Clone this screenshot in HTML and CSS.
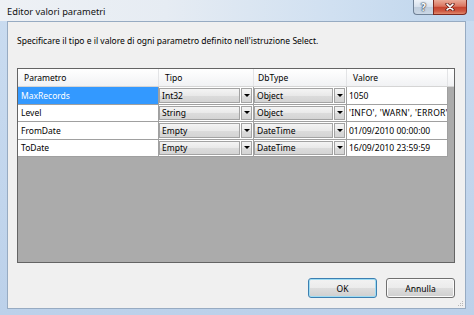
FILE: index.html
```html
<!DOCTYPE html>
<html>
<head>
<meta charset="utf-8">
<title>Editor valori parametri</title>
<link rel="stylesheet" href="styles.css">
</head>
<body>
<div class="window">
  <div class="titlebar">
    <span class="title">Editor valori parametri</span>
    <div class="caption">
      <div class="cbtn help">?</div>
      <div class="cbtn close">
        <svg width="10" height="8" viewBox="0 0 10 8"><path d="M2 1.2 L8 6.8 M8 1.2 L2 6.8" stroke="#5a1a12" stroke-width="3.2" stroke-linecap="round"/><path d="M2 1.2 L8 6.8 M8 1.2 L2 6.8" stroke="#ffffff" stroke-width="1.6" stroke-linecap="round"/></svg>
      </div>
    </div>
  </div>
  <div class="client">
    <p class="desc">Specificare il tipo e il valore di ogni parametro definito nell'istruzione Select.</p>
    <div class="grid">
      <div class="row head">
        <div class="c c1">Parametro</div>
        <div class="c c2">Tipo</div>
        <div class="c c3">DbType</div>
        <div class="c c4">Valore</div>
      </div>
      <div class="row">
        <div class="c c1 sel">MaxRecords</div>
        <div class="c c2"><div class="combo"><span class="field">Int32</span><span class="arr"></span></div></div>
        <div class="c c3"><div class="combo"><span class="field">Object</span><span class="arr"></span></div></div>
        <div class="c c4">1050</div>
      </div>
      <div class="row">
        <div class="c c1">Level</div>
        <div class="c c2"><div class="combo"><span class="field">String</span><span class="arr"></span></div></div>
        <div class="c c3"><div class="combo"><span class="field">Object</span><span class="arr"></span></div></div>
        <div class="c c4 wide">'INFO', 'WARN', 'ERROR'</div>
      </div>
      <div class="row">
        <div class="c c1">FromDate</div>
        <div class="c c2"><div class="combo"><span class="field">Empty</span><span class="arr"></span></div></div>
        <div class="c c3"><div class="combo"><span class="field">DateTime</span><span class="arr"></span></div></div>
        <div class="c c4">01/09/2010 00:00:00</div>
      </div>
      <div class="row">
        <div class="c c1">ToDate</div>
        <div class="c c2"><div class="combo"><span class="field">Empty</span><span class="arr"></span></div></div>
        <div class="c c3"><div class="combo"><span class="field">DateTime</span><span class="arr"></span></div></div>
        <div class="c c4">16/09/2010 23:59:59</div>
      </div>
    </div>
    <div class="buttons">
      <button class="btn default">OK</button>
      <button class="btn">Annulla</button>
    </div>
    <svg class="grip" width="7" height="7" viewBox="0 0 7 7"><g fill="#b8b8b8"><rect x="5" y="1" width="1" height="1"/><rect x="3" y="3" width="1" height="1"/><rect x="5" y="3" width="1" height="1"/><rect x="1" y="5" width="1" height="1"/><rect x="3" y="5" width="1" height="1"/><rect x="5" y="5" width="1" height="1"/></g></svg>
  </div>
</div>
</body>
</html>
```
FILE: styles.css
```css
* { box-sizing: border-box; }
html, body { margin: 0; padding: 0; }
body {
  width: 474px;
  height: 315px;
  overflow: hidden;
  font-family: "Noto Sans", "Open Sans", sans-serif;
  font-size: 8.5px;
  color: #000;
  background: #c2d5ea;
}
.window {
  width: 474px;
  height: 315px;
  display: flex;
  flex-direction: column;
  padding: 0 8px 6px 7px;
  background: linear-gradient(to bottom, #cadcf0, #bcd1ea);
}
.titlebar {
  height: 21px;
  flex: none;
  display: flex;
  justify-content: space-between;
  align-items: flex-start;
  margin: 0 -8px 0 -7px;
  padding: 0 7px;
  background: linear-gradient(to right, #eef1f5 0%, #e6ecf3 35%, #d0e0f1 70%, #bdd4ec 100%);
}
.title {
  font-size: 9.3px;
  line-height: 12px;
  margin-top: 6px;
  color: #111;
}
.caption { display: flex; }
.cbtn {
  height: 15px;
  display: flex;
  align-items: center;
  justify-content: center;
}
.help {
  width: 20px;
  border: 1px solid #6f8196;
  border-top: none;
  border-right: none;
  border-radius: 0 0 0 4px;
  background: linear-gradient(#eef3f9, #d6e0ec 50%, #bfcddd 51%, #cbd8e6);
  color: #fff;
  font-weight: bold;
  font-size: 10px;
  line-height: 10px;
  text-shadow: 0 0 1px #2d3b4d, 0 0 1px #2d3b4d, 0 0 2px #2d3b4d;
}
.close {
  width: 34px;
  border: 1px solid #7e2a20;
  border-top: none;
  border-radius: 0 0 4px 0;
  background: linear-gradient(#eaab98, #da7560 45%, #c6442f 52%, #cf5a43 80%, #e08a6e);
}
.client {
  flex: 1;
  display: flex;
  flex-direction: column;
  background: #f0f0f0;
  border: 1px solid #97abc2;
  padding: 13px 10px 10px 9px;
  position: relative;
}
.desc {
  margin: 0;
  line-height: 12px;
  height: 12px;
  flex: none;
}
.grid {
  flex: 1;
  margin-top: 21px;
  border: 1px solid #646464;
  background: #ababab;
  display: flex;
  flex-direction: column;
}
.row {
  display: flex;
  height: 17.5px;
  flex: none;
}
.row.head {
  height: 18px;
  background: linear-gradient(#ffffff, #f1f2f4);
  border-bottom: 1px solid #d5d5d5;
}
.c {
  height: 100%;
  display: flex;
  align-items: center;
  white-space: nowrap;
  overflow: hidden;
  background: #fff;
  border-right: 1px solid #a0a0a0;
  border-bottom: 1px solid #a0a0a0;
}
.head .c {
  background: transparent;
  border-bottom: none;
  border-right-color: #e3e4e6;
  padding-left: 6px;
}
.c1 { width: 141px; padding-left: 3px; }
.c2 { width: 95px; }
.c3 { width: 93px; }
.c4 { width: 101px; padding-left: 2px; }
.c4.wide { letter-spacing: 0.25px; }
.head .c3 { padding-left: 4px; }
.row:not(.head) .c2, .row:not(.head) .c3 { padding: 1px 1px 1px 0; }
.sel { background: #3399ff; color: #fff; }
.combo {
  flex: 1;
  height: 100%;
  display: flex;
}
.field, .arr {
  border: 1px solid #a3a3a3;
  background: linear-gradient(#f4f4f4, #e9e9e9 50%, #dcdcdc 51%, #d4d4d4);
  display: flex;
  align-items: center;
}
.field {
  flex: 1;
  padding-left: 2px;
}
.arr {
  width: 11px;
  margin-left: 1px;
  justify-content: center;
}
.arr::after {
  content: "";
  border-left: 3px solid transparent;
  border-right: 3px solid transparent;
  border-top: 3px solid #000;
}
.buttons {
  display: flex;
  justify-content: flex-end;
  gap: 9px;
  margin-top: 15px;
  flex: none;
}
.btn {
  width: 69px;
  height: 20px;
  padding: 0;
  font: inherit;
  color: #000;
  border: 1px solid #707070;
  border-radius: 3px;
  background: linear-gradient(#f2f2f2, #ebebeb 50%, #dddddd 51%, #cfcfcf);
  box-shadow: inset 0 0 0 1px #fbfbfb;
}
.btn.default {
  border-color: #3c7fb1;
  box-shadow: inset 0 0 0 1px #9fdcf3;
}
.grip {
  position: absolute;
  right: 1px;
  bottom: 1px;
}
```
